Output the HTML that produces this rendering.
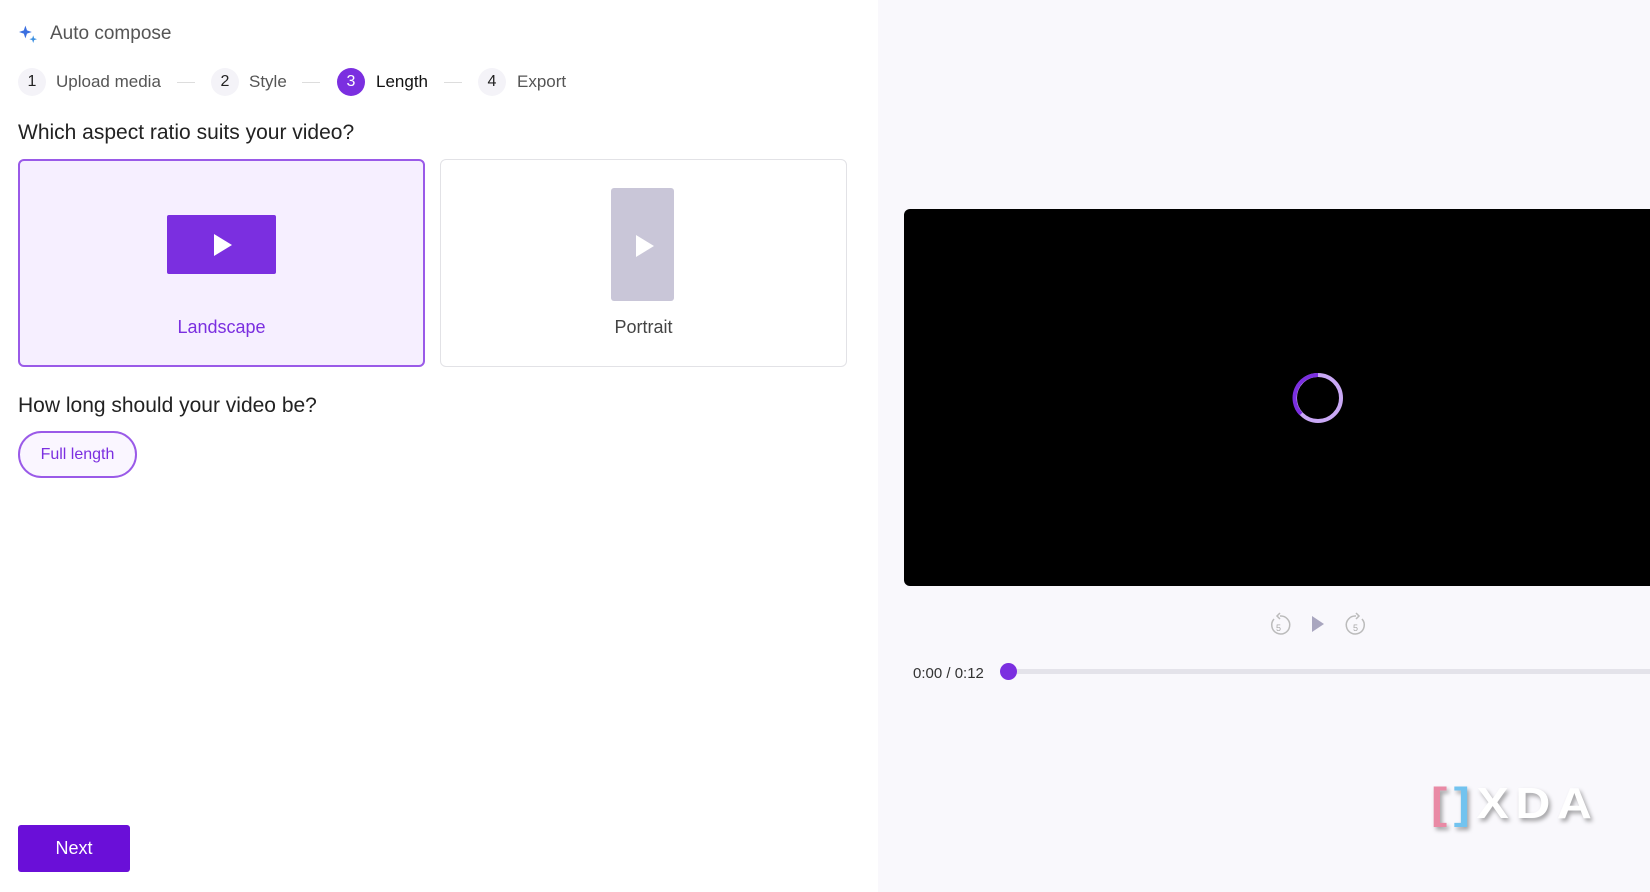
<!DOCTYPE html><html><head><style>
body{margin:0;width:1650px;height:892px;overflow:hidden;font-family:"Liberation Sans",sans-serif;background:#fff;position:relative}
.a{position:absolute}
.c{position:absolute;width:28px;height:28px;border-radius:50%;background:#f4f3f8;color:#222;font-size:16px;text-align:center;line-height:28px;top:68px}
.l{position:absolute;top:72px;font-size:17px;color:#555}
.d{position:absolute;top:82px;width:18px;height:1px;background:#ddd}
</style></head><body>
<svg class="a" style="left:19px;top:24px" width="22" height="22" viewBox="0 0 22 22"><path d="M8 2 L10 8 L16 10 L10 12 L8 18 L6 12 L0 10 L6 8Z" fill="#3b6fe0" transform="scale(.8)"/><path d="M16 13 L17 16 L20 17 L17 18 L16 21 L15 18 L12 17 L15 16Z" fill="#3b8fe0" transform="translate(-1,-1) scale(.95)"/></svg>
<div class="a" style="left:50px;top:23px;font-size:19px;color:#555">Auto compose</div>
<div class="c" style="left:18px">1</div><div class="l" style="left:56px">Upload media</div><div class="d" style="left:177px"></div>
<div class="c" style="left:211px">2</div><div class="l" style="left:249px">Style</div><div class="d" style="left:302px"></div>
<div class="c" style="left:337px;background:#7b2fe0;color:#fff">3</div><div class="l" style="left:376px;color:#111">Length</div><div class="d" style="left:444px"></div>
<div class="c" style="left:478px">4</div><div class="l" style="left:517px">Export</div>
<div class="a" style="left:18px;top:121px;font-size:21px;color:#222">Which aspect ratio suits your video?</div>
<div class="a" style="left:18px;top:159px;width:403px;height:204px;border:2px solid #9a5ae8;border-radius:6px;background:#f6efff"></div>
<div class="a" style="left:167px;top:215px;width:109px;height:59px;background:#7b2fe0;border-radius:2px"></div>
<svg class="a" style="left:212px;top:233px" width="22" height="24"><path d="M2 1 L20 12 L2 23Z" fill="#fff"/></svg>
<div class="a" style="left:18px;top:317px;width:407px;text-align:center;font-size:18px;color:#7b2fe0">Landscape</div>
<div class="a" style="left:440px;top:159px;width:405px;height:206px;border:1px solid #e2e2e6;border-radius:6px"></div>
<div class="a" style="left:611px;top:188px;width:63px;height:113px;background:#c9c6d8;border-radius:3px"></div>
<svg class="a" style="left:634px;top:234px" width="22" height="24"><path d="M2 1 L20 12 L2 23Z" fill="#fff"/></svg>
<div class="a" style="left:440px;top:317px;width:407px;text-align:center;font-size:18px;color:#444">Portrait</div>
<div class="a" style="left:18px;top:394px;font-size:21px;color:#222">How long should your video be?</div>
<div class="a" style="left:18px;top:431px;width:115px;height:43px;border:2px solid #9a5ae8;border-radius:24px;background:#faf6ff;color:#7b2fe0;font-size:16px;text-align:center;line-height:43px">Full length</div>
<div class="a" style="left:18px;top:825px;width:112px;height:47px;background:#6a0fd8;border-radius:3px;color:#fff;font-size:18px;text-align:center;line-height:47px">Next</div>
<div class="a" style="left:878px;top:0;width:772px;height:892px;background:#f9f8fc"></div>
<div class="a" style="left:904px;top:209px;width:746px;height:377px;background:#000;border-radius:6px 0 0 6px"></div>
<svg class="a" style="left:1291px;top:371px" width="54" height="54"><circle cx="27" cy="27" r="23" fill="none" stroke="#c9a8f5" stroke-width="4"/><path d="M27 4 A23 23 0 0 0 10 43" fill="none" stroke="#7b2fe0" stroke-width="4"/></svg>
<svg class="a" style="left:1268px;top:610px" width="100" height="28" fill="none" stroke="#bbb" stroke-width="1.5"><path d="M6 9 A9 9 0 1 0 12 6"/><path d="M12 3 L9 6 L12 9"/><text x="8" y="21" font-size="9" fill="#aaa" stroke="none">5</text><path d="M44 6 L56 14 L44 22Z" fill="#a9a6bf" stroke="none"/><path d="M94 9 A9 9 0 1 1 88 6"/><path d="M88 3 L91 6 L88 9"/><text x="85" y="21" font-size="9" fill="#aaa" stroke="none">5</text></svg>
<div class="a" style="left:913px;top:665px;font-size:15px;color:#333">0:00 / 0:12</div>
<div class="a" style="left:1009px;top:669px;width:641px;height:5px;background:#e4e3ea"></div>
<div class="a" style="left:1000px;top:663px;width:17px;height:17px;border-radius:50%;background:#7b2fe0"></div>
<div class="a" style="left:1431px;top:779px;font-size:44px;font-weight:bold;color:#fff;text-shadow:2px 3px 4px rgba(0,0,0,.35);letter-spacing:6px;transform:scaleX(1.1);transform-origin:left"><span style="color:#e98aa5">[</span><span style="color:#72c3ef">]</span>XDA</div>
</body></html>
